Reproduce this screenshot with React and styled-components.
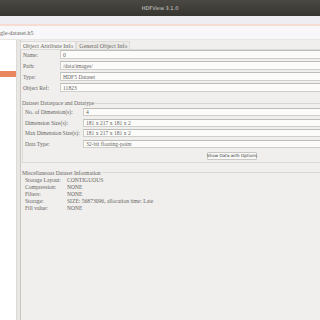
import React from "react";
import styled, { createGlobalStyle } from "styled-components";

const Global = createGlobalStyle`
  html, body { margin: 0; padding: 0; background: #f0efed; }
  #root { width: 320px; height: 320px; overflow: hidden; }
`;

const Page = styled.div`
  width: 320px;
  height: 320px;
  display: flex;
  flex-direction: column;
  overflow: hidden;
  font-family: "Liberation Serif", "DejaVu Serif", serif;
  color: #67655f;
`;

const TitleBar = styled.div`
  height: 16px;
  flex: none;
  background: linear-gradient(#4a4944, #36352f);
  color: #d8d6d0;
  font: 5px "DejaVu Sans", sans-serif;
  display: flex;
  align-items: center;
  justify-content: center;
`;

const MenuStrip = styled.div`
  height: 8px;
  flex: none;
  background: #eeedf1;
  border-bottom: 2px solid #f6dcd2;
`;

const PathRow = styled.div`
  height: 13px;
  flex: none;
  background: #f8f8fa;
  display: flex;
  align-items: center;
  font-size: 6px;
  border-bottom: 1px solid #e6e5e2;
`;

const Body = styled.div`
  flex: 1;
  display: flex;
  min-height: 0;
`;

const Sidebar = styled.div`
  width: 16px;
  flex: none;
  background: #ffffff;
  display: flex;
  flex-direction: column;
`;

const Selection = styled.div`
  margin-top: 31px;
  height: 6px;
  background: #e9865e;
`;

const Main = styled.div`
  flex: 1;
  display: flex;
  flex-direction: column;
  border-left: 1px solid #dcdbd8;
  box-shadow: inset 3px 0 0 #e8e7e4, inset 4px 0 0 #c9c8c5;
  padding-left: 3px;
  min-width: 0;
`;

const Tabs = styled.div`
  display: flex;
  height: 8px;
  margin-top: 1px;
  font-size: 6px;
  border-bottom: 1px solid #dcdbd8;
`;

const Tab = styled.div`
  padding: 0 2px;
  display: flex;
  align-items: center;
  background: ${p => (p.$active ? "#f6f5f3" : "#ecebe8")};
  border: 1px solid #dddcd9;
  border-bottom: none;
  white-space: nowrap;
`;

const Panel = styled.div`
  display: flex;
  flex-direction: column;
  width: 420px;
`;

const Rows = styled.div`
  display: flex;
  flex-direction: column;
  gap: 2px;
  padding-left: 2px;
`;

const Row = styled.div`
  display: flex;
  align-items: center;
  height: ${p => p.$h || 9}px;
  font-size: 5.6px;
`;

const Label = styled.div`
  width: ${p => p.$w}px;
  flex: none;
  white-space: nowrap;
  padding-left: 1px;
`;

const Field = styled.div`
  flex: 1;
  height: 100%;
  box-sizing: border-box;
  background: #fbfbfa;
  border: 1px solid #cfcecb;
  border-top-color: #bdbcb9;
  display: flex;
  align-items: center;
  padding-left: 2px;
  white-space: nowrap;
`;

const Group = styled.div`
  margin-top: ${p => p.$mt}px;
  margin-left: 2px;
  display: flex;
  flex-direction: column;
`;

const GroupTitle = styled.div`
  display: flex;
  align-items: center;
  font-size: 5.6px;
  white-space: nowrap;
  height: 6px;
  &::after {
    content: "";
    flex: 1;
    height: 1px;
    background: #d8d7d4;
    margin-left: 1px;
  }
`;

const GroupBody = styled.div`
  border-left: 1px solid #dcdbd8;
  border-bottom: 1px solid #dcdbd8;
  padding: 2px 0 2px 1px;
  display: flex;
  flex-direction: column;
`;

const DimRows = styled.div`
  display: flex;
  flex-direction: column;
  gap: 2.5px;
`;

const ButtonRow = styled.div`
  display: flex;
  padding-left: 183px;
  margin-top: 4px;
`;

const Button = styled.div`
  width: 50px;
  height: 8px;
  box-sizing: border-box;
  border: 1px solid #c9c8c5;
  border-radius: 1px;
  background: #f7f7f6;
  font: 4.2px "DejaVu Sans", sans-serif;
  color: #444;
  display: flex;
  align-items: center;
  justify-content: center;
  white-space: nowrap;
`;

const MiscRows = styled.div`
  display: flex;
  flex-direction: column;
  padding-top: 1px;
  padding-left: 2px;
`;

const MiscRow = styled.div`
  display: flex;
  height: 7px;
  align-items: center;
  font-size: 5.6px;
  white-space: nowrap;
`;

const MiscValue = styled.div``;

const top = [
  ["Name:", "0"],
  ["Path:", "/data/images/"],
  ["Type:", "HDF5 Dataset"],
  ["Object Ref:", "11823"],
];

const dims = [
  ["No. of Dimension(s):", "4"],
  ["Dimension Size(s):", "181 x 217 x 181 x 2"],
  ["Max Dimension Size(s):", "181 x 217 x 181 x 2"],
  ["Data Type:", "32-bit floating-point"],
];

const misc = [
  ["Storage Layout:", "CONTIGUOUS"],
  ["Compression:", "NONE"],
  ["Filters:", "NONE"],
  ["Storage:", "SIZE: 56873096, allocation time: Late"],
  ["Fill value:", "NONE"],
];

export default function App() {
  return (
    <Page>
      <Global />
      <TitleBar>HDFView 3.1.0</TitleBar>
      <MenuStrip />
      <PathRow>gle-dataset.h5</PathRow>
      <Body>
        <Sidebar>
          <Selection />
        </Sidebar>
        <Main>
          <Tabs>
            <Tab $active>Object Attribute Info</Tab>
            <Tab>General Object Info</Tab>
          </Tabs>
          <Panel>
            <Rows>
              {top.map(([l, v]) => (
                <Row key={l}>
                  <Label $w={37}>{l}</Label>
                  <Field>{v}</Field>
                </Row>
              ))}
            </Rows>
            <Group $mt={8}>
              <GroupTitle>Dataset Dataspace and Datatype</GroupTitle>
              <GroupBody>
                <DimRows>
                  {dims.map(([l, v]) => (
                    <Row key={l} $h={8}>
                      <Label $w={58}>{l}</Label>
                      <Field>{v}</Field>
                    </Row>
                  ))}
                </DimRows>
                <ButtonRow>
                  <Button>Show Data with Options</Button>
                </ButtonRow>
              </GroupBody>
            </Group>
            <Group $mt={7}>
              <GroupTitle>Miscellaneous Dataset Information</GroupTitle>
              <MiscRows>
                {misc.map(([l, v]) => (
                  <MiscRow key={l}>
                    <Label $w={42}>{l}</Label>
                    <MiscValue>{v}</MiscValue>
                  </MiscRow>
                ))}
              </MiscRows>
            </Group>
          </Panel>
        </Main>
      </Body>
    </Page>
  );
}
